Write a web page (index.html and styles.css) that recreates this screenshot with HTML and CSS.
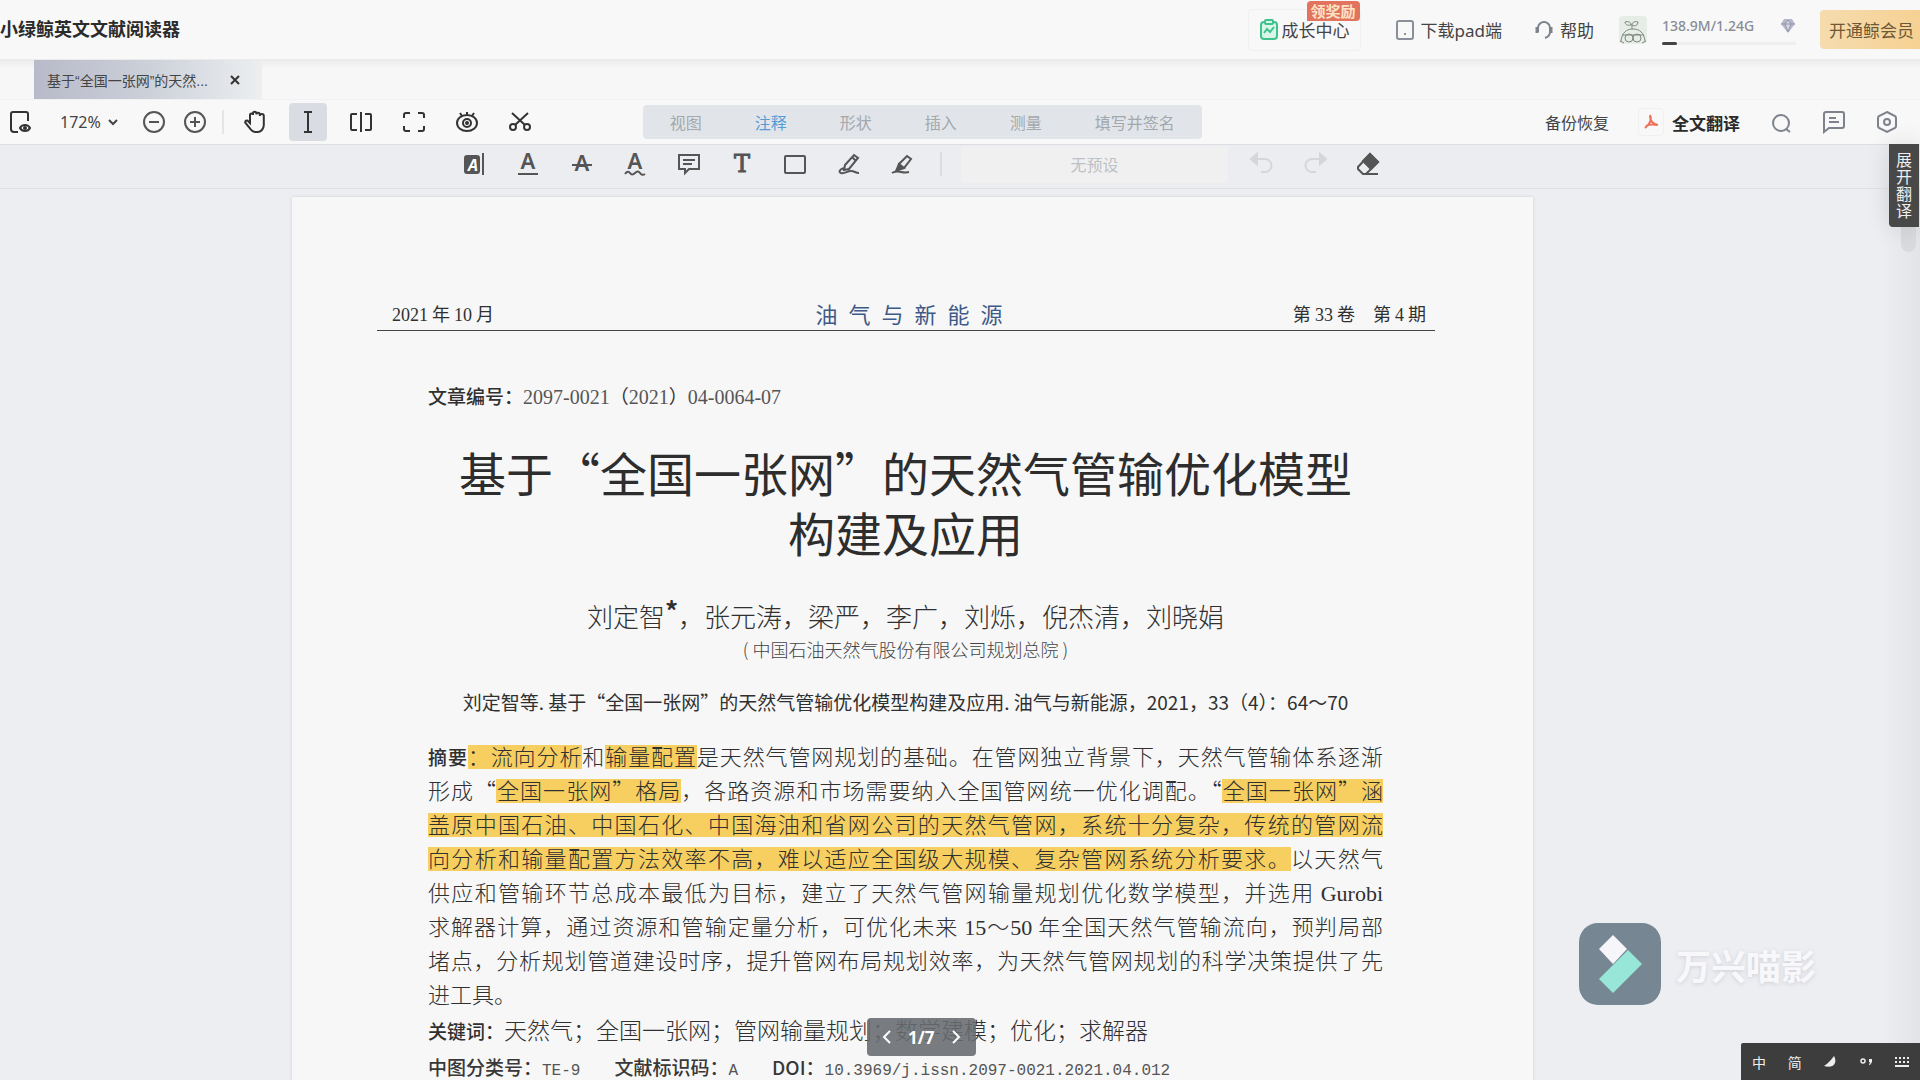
FILE: index.html
```html
<!doctype html>
<html lang="zh-CN">
<head>
	<meta charset="UTF-8">
	<title>小绿鲸英文文献阅读器</title>
	<link rel="stylesheet" href="styles.css">
</head>
<body>
	<header class="header">
		<h1 class="brand">小绿鲸英文文献阅读器</h1>
		<a class="growth" href="#">
			<svg width="20" height="22" viewBox="0 0 20 22" fill="none" stroke="#3fc28c" stroke-width="2"><rect x="2" y="3" width="16" height="17" rx="3" fill="#d9f5e8"/><rect x="6" y="1" width="8" height="4" rx="1" fill="#d9f5e8"/><path d="M5 14l3-4 3 3 4-5"/></svg>
			成长中心
			<span class="reward">领奖励</span>
		</a>
		<a class="head-link pad" href="#">
			<svg width="20" height="20" viewBox="0 0 20 20" fill="none" stroke="#8a9099" stroke-width="2"><rect x="2" y="1" width="16" height="18" rx="2"/><path d="M9 14h2"/></svg>
			下载pad端
		</a>
		<a class="head-link help" href="#">
			<svg width="20" height="20" viewBox="0 0 20 20" fill="none" stroke="#7d838c" stroke-width="2"><path d="M4 12V8a6 6 0 0 1 12 0v4c0 3-2 5-5 6"/><path d="M3 7v6M17 7v6" stroke-width="3"/></svg>
			帮助
		</a>
		<svg class="avatar" width="28" height="28" viewBox="0 0 28 28" fill="none" stroke="#7f8880" stroke-width="1"><rect width="28" height="28" rx="4" fill="#e6ece6" stroke="none"/><path d="M13 13c0-3 0-4-1-5M12 9C8 10 6 8 6 6c3-1 6 0 6 3zM13 9c0-3 3-4 6-3 0 3-3 5-6 3z"/><path d="M2 25c1-8 5-12 12-12s11 4 12 12M3 19h22M1 25l4 2M27 25l-4 2"/><circle cx="10" cy="22" r="4"/><circle cx="18" cy="22" r="4"/></svg>
		<div class="usage">
			<div class="usage-top">
				<label for="space">138.9M/1.24G</label>
				<svg width="16" height="16" viewBox="0 0 16 16"><path d="M4 1h8l3 5-7 9-7-9z" fill="#b5b6c9"/><path d="M1 6h14M5 6l3 8 3-8-3-4z" fill="#d5d5e3" stroke="#9496ab" stroke-width="1"/></svg>
			</div>
			<progress id="space" value="11" max="100"></progress>
		</div>
		<button class="vip">开通鲸会员</button>
	</header>

	<nav class="tabs">
		<div class="tab">
			<a href="#">基于“全国一张网”的天然...</a>
			<button class="close" aria-label="关闭"><svg width="10" height="10" viewBox="0 0 10 10" stroke="#333" stroke-width="2"><path d="M1 1l8 8M9 1L1 9"/></svg></button>
		</div>
	</nav>

	<div class="toolbar">
		<button class="tool" aria-label="页面设置"><svg width="24" height="24" viewBox="0 0 24 24"><path d="M10 22H6a3 3 0 0 1-3-3V4a2 2 0 0 1 2-2h13a2 2 0 0 1 2 2v7"/><path d="M12 18c2-4 8-4 10 0-2 4-8 4-10 0z"/><circle cx="17" cy="18" r="1"/></svg></button>
		<button class="zoom">172%<svg width="12" height="8" viewBox="0 0 12 8"><path d="M2 2l4 4 4-4"/></svg></button>
		<div class="zoom-btns">
			<button class="tool grey" aria-label="缩小"><svg width="24" height="24" viewBox="0 0 24 24"><circle cx="12" cy="12" r="10"/><path d="M7 12h10"/></svg></button>
			<button class="tool grey" aria-label="放大"><svg width="24" height="24" viewBox="0 0 24 24"><circle cx="12" cy="12" r="10"/><path d="M7 12h10M12 7v10"/></svg></button>
		</div>
		<span class="line"></span>
		<div class="modes">
			<button class="mode" aria-label="手型"><svg width="24" height="24" viewBox="0 0 24 24"><path d="M7 13V5a1.500 1.500 0 0 1 3 0V3.500a1.700 1.700 0 0 1 3.400 0V4.500a1.700 1.700 0 0 1 3.400 0V6a1.700 1.700 0 0 1 4 0v9c0 4-3 7-6 7h-2c-3 0-5-2-6.500-4.500L2.500 13c-1-2 1.500-3.500 3-1.500z"/></svg></button>
			<button class="mode on" aria-label="选择文本"><svg width="24" height="24" viewBox="0 0 24 24"><path d="M8 2h8M8 22h8M12 2v20"/></svg></button>
			<button class="mode" aria-label="对照"><svg width="24" height="24" viewBox="0 0 24 24"><path d="M8 4H3a1 1 0 0 0-1 1v14a1 1 0 0 0 1 1h5M16 4h5a1 1 0 0 1 1 1v14a1 1 0 0 1-1 1h-5M12 2v20"/></svg></button>
			<button class="mode" aria-label="全屏"><svg width="24" height="24" viewBox="0 0 24 24"><path d="M8 3H4a2 2 0 0 0-2 2v3M16 3h4a2 2 0 0 1 2 2v3M8 21H4a2 2 0 0 1-2-2v-3M16 21h4a2 2 0 0 0 2-2v-3"/></svg></button>
			<button class="mode" aria-label="护眼"><svg width="24" height="24" viewBox="0 0 24 24"><ellipse cx="12" cy="13" rx="10" ry="8"/><circle cx="12" cy="13" r="4"/><circle cx="12" cy="13" r="1"/><path d="M12 5V2M7 6L5 3M17 6l2-3"/></svg></button>
			<button class="mode" aria-label="截图"><svg width="24" height="24" viewBox="0 0 24 24"><circle cx="5" cy="17" r="3"/><circle cx="19" cy="17" r="3"/><path d="M4 3l13 12M20 3L7 15"/></svg></button>
		</div>
		<div class="menus">
			<button>视图</button>
			<button class="current">注释</button>
			<button>形状</button>
			<button>插入</button>
			<button>测量</button>
			<button>填写并签名</button>
		</div>
		<div class="right">
			<a class="backup" href="#">备份恢复</a>
			<a class="full" href="#">
				<span class="pdf"><svg width="16" height="16" viewBox="0 0 16 16"><path d="M7 1c2 4 0 9-5 13M7 2c0 5 3 8 8 9M3 12c4-2 7-2 11-1"/></svg></span>
				全文翻译
			</a>
			<button class="tool pale" aria-label="搜索"><svg width="24" height="24" viewBox="0 0 24 24"><circle cx="12" cy="13" r="8"/><path d="M17 19l4 3"/></svg></button>
			<button class="tool pale" aria-label="批注"><svg width="24" height="24" viewBox="0 0 24 24"><path d="M4 2h16a2 2 0 0 1 2 2v12a2 2 0 0 1-2 2H7l-5 4V4a2 2 0 0 1 2-2zM7 8h7M7 12h10"/></svg></button>
			<button class="tool pale" aria-label="设置"><svg width="24" height="24" viewBox="0 0 24 24"><path d="M12 2l8 4q1 1 1 2v8q0 1-1 2l-8 4-8-4q-1-1-1-2V8q0-1 1-2z"/><circle cx="12" cy="12" r="3"/></svg></button>
		</div>
	</div>

	<div class="subbar">
		<div class="marks">
			<button class="tool dark" aria-label="高亮"><svg width="24" height="24" viewBox="0 0 24 24"><rect x="2" y="4" width="14" height="17" rx="2" class="fill"/><path d="M20 1v22"/><text x="10" y="19" class="letter white">A</text></svg></button>
			<button class="tool dark" aria-label="下划线"><svg width="24" height="24" viewBox="0 0 24 24"><text x="12" y="17" class="letter big">A</text><path d="M2 22h20"/></svg></button>
			<button class="tool dark" aria-label="删除线"><svg width="24" height="24" viewBox="0 0 24 24"><text x="12" y="19" class="letter big">A</text><path d="M2 13h20"/></svg></button>
			<button class="tool dark" aria-label="波浪线"><svg width="24" height="24" viewBox="0 0 24 24"><text x="12" y="17" class="letter big">A</text><path d="M2 22q3-4 5-1t5 0 5 0 5 1"/></svg></button>
			<button class="tool dark" aria-label="注释框"><svg width="24" height="24" viewBox="0 0 24 24"><path d="M2 3h20v14H12l-4 4v-4H2zM6 8h12M6 12h9"/></svg></button>
			<button class="tool dark" aria-label="文本"><svg width="24" height="24" viewBox="0 0 24 24"><text x="12" y="20" class="letter slab">T</text></svg></button>
			<button class="tool dark" aria-label="矩形"><svg width="24" height="24" viewBox="0 0 24 24"><rect x="2" y="4" width="20" height="17" rx="1"/></svg></button>
			<button class="tool dark" aria-label="铅笔"><svg width="24" height="24" viewBox="0 0 24 24"><path d="M8 13L17 3l4 3-9 11-5 1zM15 5l4 4M7 16c-4 1-6 4-3 5 4 1 6-2 10-2s4 2 8 2"/></svg></button>
			<button class="tool dark" aria-label="荧光笔"><svg width="24" height="24" viewBox="0 0 24 24"><path d="M9 12l8-8 4 3-7 9-6 1z"/><path d="M9 12l5 4-8 3z" class="fill"/><path d="M2 21c6-4 10 1 17-1"/></svg></button>
		</div>
		<span class="line"></span>
		<button class="preset" disabled>无预设</button>
		<div class="history">
			<button class="tool faint" aria-label="撤销" disabled><svg width="24" height="24" viewBox="0 0 24 24"><path d="M4 7h11a6 6 0 0 1 0 13h-4"/><path d="M7 2v10L1 7z" class="fill"/></svg></button>
			<button class="tool faint" aria-label="重做" disabled><svg width="24" height="24" viewBox="0 0 24 24"><path d="M20 7H9a6 6 0 0 0 0 13h4"/><path d="M17 2v10l6-5z" class="fill"/></svg></button>
			<button class="tool dark" aria-label="橡皮擦"><svg width="24" height="24" viewBox="0 0 24 24"><path d="M14 2l8 8-12 12H7l-5-5v-2zM8 22h14"/><path d="M14 2l8 8-7 7-8-8z" class="fill"/></svg></button>
		</div>
	</div>

	<main class="viewer">
		<article class="paper">
			<div class="running">
				<span><span class="latin">2021</span> 年 <span class="latin">10</span> 月</span>
				<span class="journal">油&ensp;气&ensp;与&ensp;新&ensp;能&ensp;源</span>
				<span class="issue">第 <span class="latin">33</span> 卷　第 <span class="latin">4</span> 期</span>
			</div>
			<div class="content">
				<p class="number"><b>文章编号：</b><span class="latin">2097-0021</span>（<span class="latin">2021</span>）<span class="latin">04-0064-07</span></p>
				<h2 class="title">基于“全国一张网”的天然气管输优化模型<br>构建及应用</h2>
				<p class="authors">刘定智<sup>*</sup>，张元涛，梁严，李广，刘烁，倪杰清，刘晓娟</p>
				<p class="org">( 中国石油天然气股份有限公司规划总院 )</p>
				<p class="cite">刘定智等. 基于“全国一张网”的天然气管输优化模型构建及应用. 油气与新能源，2021，33（4）：64～70</p>
				<p class="abstract"><b>摘要</b><mark>：流向分析</mark>和<mark>输量配置</mark>是天然气管网规划的基础。在管网独立背景下，天然气管输体系逐渐<br>形成“<mark>全国一张网”格局</mark>，各路资源和市场需要纳入全国管网统一优化调配。“<mark>全国一张网”涵<br>盖原中国石油、中国石化、中国海油和省网公司的天然气管网，系统十分复杂，传统的管网流<br>向分析和输量配置方法效率不高，难以适应全国级大规模、复杂管网系统分析要求。</mark>以天然气<br>供应和管输环节总成本最低为目标，建立了天然气管网输量规划优化数学模型，并选用 <span class="latin">Gurobi</span><br>求解器计算，通过资源和管输定量分析，可优化未来 <span class="latin">15～50</span> 年全国天然气管输流向，预判局部<br>堵点，分析规划管道建设时序，提升管网布局规划效率，为天然气管网规划的科学决策提供了先</p>
				<p class="abstract tail">进工具。</p>
				<p class="keywords"><b>关键词：</b>天然气；全国一张网；管网输量规划；数学建模；优化；求解器</p>
				<p class="codes">
					<span><b>中图分类号：</b>TE-9</span>
					<span><b>文献标识码：</b>A</span>
					<span><b>DOI：</b>10.3969/j.issn.2097-0021.2021.04.012</span>
				</p>
			</div>
		</article>
	</main>

	<div class="side">
		<button class="expand">展开翻译</button>
		<div class="thumb"></div>
	</div>

	<div class="pager">
		<button aria-label="上一页"><svg width="10" height="16" viewBox="0 0 10 16"><path d="M8 2L2 8l6 6"/></svg></button>
		<span>1/7</span>
		<button aria-label="下一页"><svg width="10" height="16" viewBox="0 0 10 16"><path d="M2 2l6 6-6 6"/></svg></button>
	</div>

	<div class="watermark">
		<svg width="82" height="82" viewBox="0 0 82 82"><rect width="82" height="82" rx="19" fill="#768793"/><path d="M34 12l14 14-14 15-14-15z" fill="#f6f6fa"/><path d="M49 27l14 14-29 29-14-14z" fill="#98e6d8"/></svg>
		<span>万兴喵影</span>
	</div>

	<div class="ime">
		<button>中</button>
		<button>简</button>
		<button aria-label="半角"><svg width="14" height="14" viewBox="0 0 14 14" fill="#eee"><path d="M11 1c4 7-1 13-10 10q5-3 10-10z"/></svg></button>
		<button aria-label="标点"><svg width="14" height="14" viewBox="0 0 14 14"><circle cx="4" cy="6" r="2" fill="none" stroke="#eee" stroke-width="1.500"/><path d="M10 4h3v3l-2 3h-1l1-3h-1z" fill="#eee"/></svg></button>
		<button aria-label="键盘"><svg width="16" height="14" viewBox="0 0 16 14" stroke="#eee" stroke-width="2"><path d="M1 3h14M1 7h14" stroke-dasharray="2"/><path d="M1 11h14"/></svg></button>
	</div>
</body>
</html>
```
FILE: styles.css
```css
*{
	box-sizing: border-box;
	padding: 0;
	margin: 0;
}
body{
	height: 100vh;
	overflow: hidden;
	display: flex;
	flex-direction: column;
	background: #eceef2;
	color: #444;
	font-family: "Noto Sans", "Noto Sans CJK SC", sans-serif;
	font-size: 16px;
}
a{
	color: inherit;
	text-decoration: none;
}
button{
	border: none;
	background: none;
	color: inherit;
	font: inherit;
}
svg{
	display: block;
	flex: none;
	overflow: visible;
}

/* 顶栏 */
.header{
	height: 59px;
	flex: none;
	display: flex;
	align-items: center;
	background: #f8f8f8;
	font-size: 17px;
	white-space: nowrap;
}
.brand{
	margin-right: auto;
	padding-bottom: 4px;
	font-size: 18px;
	color: #2b2b2b;
}
.growth{
	position: relative;
	height: 42px;
	display: flex;
	align-items: center;
	gap: 3px;
	padding: 0 10px;
	border: 1px solid #f0f0f0;
	border-radius: 4px;
}
.reward{
	position: absolute;
	top: -9px;
	right: 0;
	padding: 0 4px;
	background: #e2735f;
	border-radius: 4px 4px 4px 0;
	color: #fde3c4;
	font-size: 15px;
	font-weight: bold;
	line-height: 20px;
}
.head-link{
	display: flex;
	align-items: center;
	gap: 6px;
}
.pad{
	margin-left: 34px;
}
.help{
	margin-left: 32px;
}
.avatar{
	margin-left: 25px;
}
.usage{
	width: 134px;
	margin: 0 24px 0 15px;
	padding-top: 1px;
	font-size: 14px;
	font-weight: 500;
	color: #888d95;
}
.usage-top{
	display: flex;
	justify-content: space-between;
	align-items: center;
	line-height: 20px;
}
progress{
	display: block;
	width: 100%;
	height: 3px;
	margin-top: 6px;
	appearance: none;
	border: none;
}
progress::-webkit-progress-bar{
	background: #eee;
	border-radius: 2px;
}
progress::-webkit-progress-value{
	background: #444;
	border-radius: 2px;
}
.vip{
	height: 39px;
	padding: 0 6px 0 9px;
	border-radius: 4px 0 0 4px;
	background: linear-gradient(90deg, #f5dcae, #f6d193);
	color: #6e5836;
}

/* 标签页 */
.tabs{
	height: 41px;
	flex: none;
	padding: 1px 0 0 34px;
	background: linear-gradient(#ebebeb, #f7f7f7 10px);
	border-bottom: 1px solid #f0f1f3;
}
.tab{
	width: 228px;
	height: 39px;
	display: flex;
	align-items: center;
	justify-content: space-between;
	padding: 0 22px 0 13px;
	background: linear-gradient(90deg, #b8bac9, #ccd0d9 50%, #eceef0);
	font-family: "Liberation Sans", "Noto Sans CJK SC", sans-serif;
	font-size: 14px;
}

/* 工具栏 */
.toolbar{
	height: 45px;
	flex: none;
	display: flex;
	align-items: center;
	padding: 0 21px 0 8px;
	background: #f8f8f8;
	border-bottom: 1px solid #dcdee3;
	white-space: nowrap;
}
.toolbar svg, .subbar svg{
	fill: none;
	stroke: currentColor;
	stroke-width: 2;
}
.tool{
	width: 24px;
	height: 24px;
	flex: none;
	color: #333;
}
.grey{
	color: #555;
}
.pale{
	color: #7d828c;
}
.dark{
	color: #555;
}
.faint{
	color: #d4d6da;
}
.subbar svg .fill{
	fill: currentColor;
}
.zoom{
	display: flex;
	align-items: center;
	gap: 6px;
	margin-left: 28px;
}
.zoom-btns{
	display: flex;
	gap: 17px;
	margin-left: 23px;
}
.line{
	width: 2px;
	height: 24px;
	background: #e4e5e8;
}
.toolbar .line{
	margin-left: 15px;
}
.modes{
	display: flex;
	gap: 15px;
	margin-left: 12px;
}
.mode{
	width: 38px;
	height: 38px;
	display: flex;
	align-items: center;
	justify-content: center;
	border-radius: 4px;
	color: #333;
}
.on{
	background: #d9dde3;
}
.menus{
	display: flex;
	gap: 53px;
	height: 34px;
	margin-left: 104px;
	padding: 0 27px;
	border-radius: 4px;
	background: #e1e5ea;
	color: #a3a8ad;
}
.menus .current{
	color: #569bd5;
}
.right{
	display: flex;
	align-items: center;
	gap: 29px;
	margin-left: auto;
}
.full{
	display: flex;
	align-items: center;
	gap: 8px;
	color: #2b2b2b;
	font-size: 17px;
	font-weight: bold;
}
.pdf{
	padding: 5px 4px;
	border: 1px solid #f0f0f0;
	border-radius: 4px;
	color: #f0705c;
}

/* 注释工具 */
.subbar{
	height: 44px;
	flex: none;
	display: flex;
	align-items: center;
	padding: 0 0 5px 463px;
	background: #ecedf1;
	border-bottom: 1px solid #dfe1e5;
}
.marks{
	width: 451px;
	display: flex;
	justify-content: space-between;
}
.subbar .line{
	margin: 0 19px 0 26px;
	background: #dadce1;
}
.letter{
	fill: currentColor;
	stroke: none;
	text-anchor: middle;
	font-family: "Noto Sans", sans-serif;
	font-size: 16px;
	font-weight: bold;
}
.white{
	fill: #fff;
	font-style: italic;
}
.big{
	font-size: 22px;
	font-weight: 600;
}
.slab{
	font-family: "DejaVu Serif", serif;
	font-size: 24px;
	font-weight: normal;
	stroke: currentColor;
	stroke-width: 1px;
}
.preset{
	width: 267px;
	height: 37px;
	border-radius: 4px;
	background: #f0f0f1;
	color: #bdc0c5;
}
.history{
	display: flex;
	gap: 29px;
	margin-left: 22px;
}

/* 文档 */
.viewer{
	flex: 1;
	min-height: 0;
	padding: 8px 387px 0 292px;
	overflow: hidden;
	background: linear-gradient(270deg, #e3e4e7, #eceef2 40px);
}
.paper{
	padding: 99px 98px 80px 85px;
	background: #f7f7f7;
	box-shadow: 0 0 3px #cfd1d5;
	color: #303030;
	font-family: "Noto Sans CJK SC", sans-serif;
	white-space: nowrap;
}
.latin{
	font-family: "Liberation Serif", "Noto Sans CJK SC", serif;
	line-height: 1;
}
.running{
	display: grid;
	grid-template-columns: 1fr auto 1fr;
	padding: 0 9px 0 15px;
	border-bottom: 1px solid #444;
	font-size: 18px;
	line-height: 34px;
}
.journal{
	color: #3e5a88;
	font-size: 22px;
}
.issue{
	text-align: right;
}
.content{
	padding: 0 52px 0 51px;
	font-size: 19px;
	line-height: 30px;
}
.content b{
	font-size: 19px;
	font-weight: 500;
	line-height: 1;
}
.number{
	margin-top: 50px;
}
.number .latin{
	font-size: 20px;
	color: #555;
}
.title{
	margin-top: 31px;
	color: #2d2d2d;
	font-size: 47px;
	font-weight: normal;
	line-height: 60px;
	text-align: center;
}
.authors{
	margin-top: 36px;
	font-size: 26px;
	font-weight: 300;
	line-height: 36px;
	text-align: center;
}
.authors sup{
	font-size: 26px;
	font-weight: bold;
	line-height: 0;
	vertical-align: 6px;
}
.org{
	color: #444;
	font-size: 18px;
	font-weight: 300;
	text-align: center;
}
.cite{
	margin-top: 23px;
	text-align: center;
}
.abstract{
	margin-top: 21px;
	font-size: 22px;
	font-weight: 300;
	line-height: 34px;
	text-align: justify;
	text-align-last: justify;
	white-space: normal;
}
.tail{
	margin-top: 0;
	text-align-last: left;
}
mark{
	background: linear-gradient(#f7cf60, #f7cf60) 0 6px / 100% 24px no-repeat;
	box-decoration-break: clone;
	-webkit-box-decoration-break: clone;
	color: inherit;
}
.keywords{
	margin-top: 2px;
	font-size: 23px;
	font-weight: 300;
	line-height: 34px;
}
.codes{
	display: flex;
	gap: 34px;
	margin-top: 8px;
	color: #555;
	font-family: "Liberation Mono", "Noto Sans CJK SC", monospace;
	font-size: 16px;
	line-height: 34px;
}
.codes b{
	color: #383838;
	font-family: "Noto Sans CJK SC", sans-serif;
}

/* 浮层 */
.side{
	position: absolute;
	top: 144px;
	right: 1px;
}
.expand{
	width: 30px;
	height: 83px;
	padding: 0 7px;
	border-radius: 0 0 0 4px;
	background: #484848;
	box-shadow: 0 0 24px rgba(0, 0, 0, .12);
	color: #eee;
	line-height: 17px;
	white-space: normal;
}
.thumb{
	width: 15px;
	height: 25px;
	margin-left: 12px;
	border-radius: 0 0 8px 8px;
	background: #d9dadd;
}
.pager{
	position: absolute;
	left: 867px;
	bottom: 24px;
	height: 38px;
	display: flex;
	align-items: center;
	gap: 16px;
	padding: 0 15px;
	border-radius: 4px;
	background: rgba(103, 107, 112, .88);
	color: #fff;
	font-size: 17px;
	font-weight: bold;
}
.pager svg{
	fill: none;
	stroke: #fff;
	stroke-width: 2;
}
.watermark{
	position: absolute;
	right: 104px;
	bottom: 75px;
	display: flex;
	align-items: center;
	gap: 15px;
	color: #f8f8fb;
	font-size: 35px;
	font-weight: bold;
	text-shadow: 0 1px 4px #cfd0d6;
}
.ime{
	position: absolute;
	right: 0;
	bottom: 0;
	width: 179px;
	height: 37px;
	display: flex;
	border-radius: 2px 0 0 0;
	background: #3d3d3d;
	color: #eee;
	font-size: 14px;
}
.ime button{
	flex: 1;
	display: flex;
	align-items: center;
	justify-content: center;
}
```
